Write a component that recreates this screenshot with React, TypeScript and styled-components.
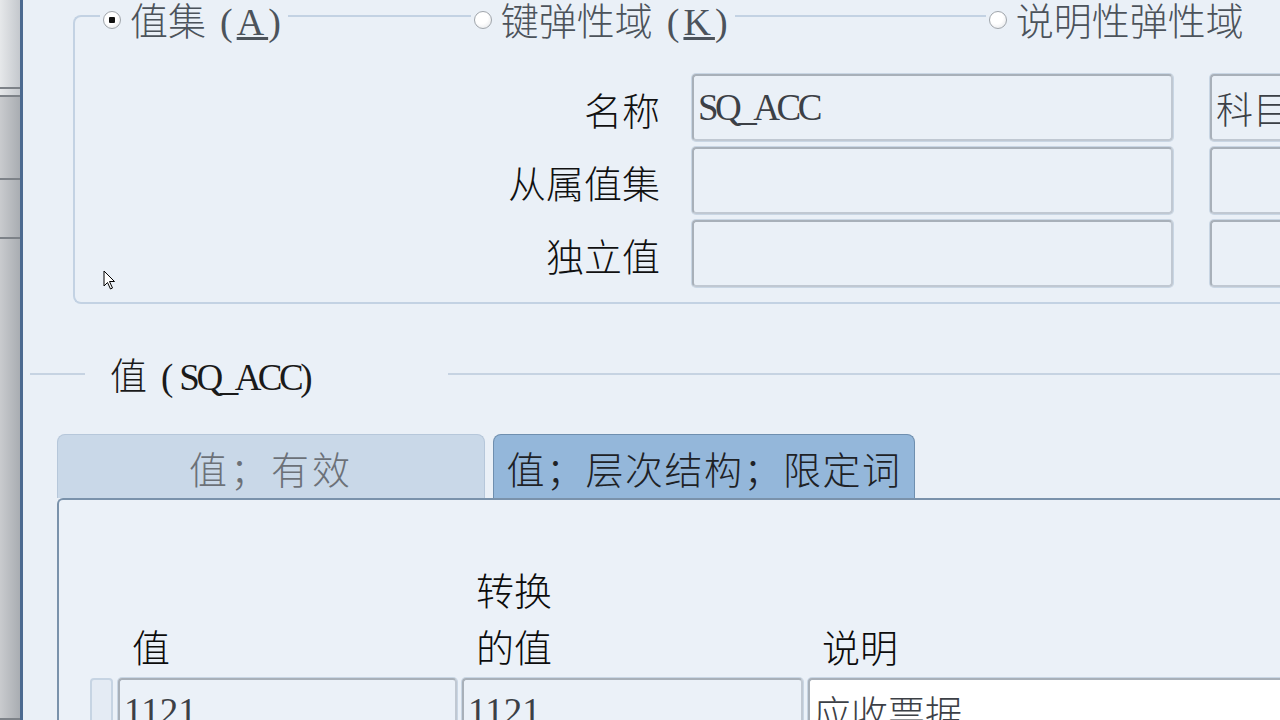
import styled, { createGlobalStyle } from 'styled-components'

const Global = createGlobalStyle`
  html, body {
    margin: 0;
    padding: 0;
    width: 1280px;
    height: 720px;
    overflow: hidden;
    background: #eaf0f7;
  }
  body {
    font-family: "Liberation Serif", "Noto Sans CJK SC", serif;
    font-weight: 300;
    color: #141414;
  }
`

const Page = styled.div`
  display: flex;
  width: 1280px;
  height: 720px;
  overflow: hidden;
`

const SideStrip = styled.div`
  width: 20px;
  flex-shrink: 0;
  display: flex;
  flex-direction: column;
  background: linear-gradient(90deg, #e4e6e8 0%, #c6c9cd 70%, #b4b8bd 100%);
`

const StripBlock = styled.div<{ $h: number; $dark?: boolean }>`
  height: ${(p) => p.$h}px;
  border-bottom: 2px solid #7d8288;
  background: ${(p) =>
    p.$dark
      ? 'linear-gradient(90deg, #c9cbce 0%, #a9adb2 100%)'
      : 'linear-gradient(90deg, #e6e8ea 0%, #c4c8cd 100%)'};
`

const EdgeLine = styled.div`
  width: 3px;
  flex-shrink: 0;
  background: #4c6a90;
`

const Main = styled.div`
  flex: 1;
  min-width: 0;
  display: flex;
  flex-direction: column;
`

const GroupBox = styled.div`
  position: relative;
  margin: 15px 0 0 50px;
  padding-bottom: 15px;
  border: 2px solid #c3d2e3;
  border-right: none;
  border-radius: 8px 0 0 8px;
`

const RadioRow = styled.div`
  display: flex;
  height: 44px;
  margin-top: -17px;
`

const RadioItem = styled.label<{ $left: number; $w: number }>`
  display: flex;
  align-items: center;
  gap: 9px;
  margin-left: ${(p) => p.$left}px;
  width: ${(p) => p.$w}px;
  padding: 0 3px;
  box-sizing: border-box;
  background: #eaf0f7;
  font-size: 38px;
  line-height: 44px;
  color: #4c535b;
  white-space: nowrap;
`

const RadioDot = styled.span<{ $on?: boolean }>`
  display: flex;
  align-items: center;
  justify-content: center;
  flex: 0 0 18px;
  width: 18px;
  height: 18px;
  box-sizing: border-box;
  border-radius: 50%;
  border: 1.5px solid #a0a5ab;
  background: radial-gradient(circle at 40% 35%, #ffffff 45%, #e0e2e5 100%);
  margin-top: -4px;
  &::after {
    content: '';
    width: 6px;
    height: 6px;
    background: #111;
    border-radius: 1px;
    display: ${(p) => (p.$on ? 'block' : 'none')};
  }
`

const Paren = styled.span`
  margin-left: 14px;
  letter-spacing: 4px;
`

const FormGrid = styled.div`
  display: grid;
  grid-template-columns: 585px 481px 200px;
  column-gap: 32px;
  row-gap: 6px;
  margin-top: 30px;
  & > :nth-child(3n) {
    margin-left: 5px;
  }
`

const FieldLabel = styled.div`
  display: flex;
  align-items: center;
  justify-content: flex-end;
  font-size: 38px;
  color: #111;
  padding-top: 2px;
`

const Field = styled.div<{ $white?: boolean }>`
  height: 67px;
  box-sizing: border-box;
  border: 2px solid #a8b0b9;
  border-right-color: #c0c8d2;
  border-bottom-color: #c0c8d2;
  box-shadow: 0 0 0 1px #c9d6e4;
  border-radius: 4px;
  background: ${(p) => (p.$white ? '#ffffff' : 'transparent')};
  display: flex;
  align-items: center;
  padding-left: 4px;
  font-size: 37px;
  color: #3c4046;
  white-space: nowrap;
  overflow: hidden;
`

const Narrow = styled.span`
  letter-spacing: -3.5px;
`

const Cursor = styled.svg`
  position: absolute;
  left: 28px;
  top: 253px;
`

const SectionHead = styled.div`
  display: flex;
  align-items: center;
  height: 50px;
  margin-top: 45px;
`

const Rule = styled.div<{ $w?: number }>`
  height: 2px;
  background: #c6d3e2;
  width: ${(p) => (p.$w ? `${p.$w}px` : 'auto')};
  flex: ${(p) => (p.$w ? 'none' : 1)};
  margin-left: ${(p) => (p.$w ? '7px' : '0')};
`

const SectionTitle = styled.div`
  font-size: 37px;
  color: #1a1a1a;
  width: 315px;
  padding-left: 25px;
  box-sizing: border-box;
  white-space: nowrap;
  margin-right: 48px;
  & ${Paren} {
    letter-spacing: 6px;
  }
`

const TabRow = styled.div`
  display: flex;
  gap: 8px;
  margin: 35px 0 0 34px;
`

const Tab = styled.div<{ $active?: boolean; $w: number }>`
  width: ${(p) => p.$w}px;
  height: 64px;
  box-sizing: border-box;
  border: 1px solid ${(p) => (p.$active ? '#6f8faf' : '#b6c7da')};
  border-bottom: none;
  border-radius: 8px 8px 0 0;
  background: ${(p) => (p.$active ? '#94b7da' : '#c9d8e8')};
  color: ${(p) => (p.$active ? '#1e2226' : '#6c7178')};
  font-size: 38px;
  letter-spacing: ${(p) => (p.$active ? '1.5px' : '3px')};
  display: flex;
  align-items: center;
  justify-content: center;
  padding-top: 1px;
  white-space: nowrap;
`

const Panel = styled.div`
  margin-left: 34px;
  flex: 1;
  border-left: 2px solid #7a92ab;
  border-top: 2px solid #7a92ab;
  border-top-left-radius: 6px;
  background: #ebf1f8;
  padding: 64px 0 0 31px;
`

const Table = styled.div`
  display: grid;
  grid-template-columns: 23px 339px 341px 480px;
  column-gap: 5px;
`

const ColHead = styled.div`
  font-size: 38px;
  line-height: 57px;
  padding-left: 14px;
  color: #0c0c0c;
  align-self: end;
`

const RowMark = styled.div`
  height: 67px;
  box-sizing: border-box;
  border: 2px solid #c6d4e3;
  border-radius: 4px;
  background: #e4ebf4;
`

function Radio({ on, left, w, children }: { on?: boolean; left: number; w: number; children: React.ReactNode }) {
  return (
    <RadioItem $left={left} $w={w}>
      <RadioDot $on={on} />
      <span>{children}</span>
    </RadioItem>
  )
}

export default function App() {
  return (
    <Page>
      <Global />
      <SideStrip>
        <StripBlock $h={88} />
        <StripBlock $h={6} />
        <StripBlock $h={82} $dark />
        <StripBlock $h={58} $dark />
        <StripBlock $h={486} $dark />
      </SideStrip>
      <EdgeLine />
      <Main>
        <GroupBox>
          <RadioRow>
            <Radio on left={25} w={190}>
              值集<Paren>(<u>A</u>)</Paren>
            </Radio>
            <Radio left={183} w={269}>
              键弹性域<Paren>(<u>K</u>)</Paren>
            </Radio>
            <Radio left={251} w={300}>
              说明性弹性域
            </Radio>
          </RadioRow>
          <FormGrid>
            <FieldLabel>名称</FieldLabel>
            <Field>
              <Narrow>SQ_ACC</Narrow>
            </Field>
            <Field>科目</Field>
            <FieldLabel>从属值集</FieldLabel>
            <Field />
            <Field />
            <FieldLabel>独立值</FieldLabel>
            <Field />
            <Field />
          </FormGrid>
          <Cursor width="13" height="20" viewBox="0 0 13 20">
            <path d="M1 1 L1 16 L4.5 12.5 L7.5 19 L9.5 18 L6.5 11.5 L11.5 11.5 Z" fill="#fff" stroke="#000" strokeWidth="1" />
          </Cursor>
        </GroupBox>

        <SectionHead>
          <Rule $w={55} />
          <SectionTitle>
            值<Paren>
              (<Narrow>SQ_ACC</Narrow>)
            </Paren>
          </SectionTitle>
          <Rule />
        </SectionHead>

        <TabRow>
          <Tab $w={428}>值；有效</Tab>
          <Tab $w={422} $active>
            值；层次结构；限定词
          </Tab>
        </TabRow>

        <Panel>
          <Table>
            <div />
            <ColHead>值</ColHead>
            <ColHead>
              转换
              <br />
              的值
            </ColHead>
            <ColHead>说明</ColHead>
            <RowMark />
            <Field>1121</Field>
            <Field>1121</Field>
            <Field $white>应收票据</Field>
          </Table>
        </Panel>
      </Main>
    </Page>
  )
}
